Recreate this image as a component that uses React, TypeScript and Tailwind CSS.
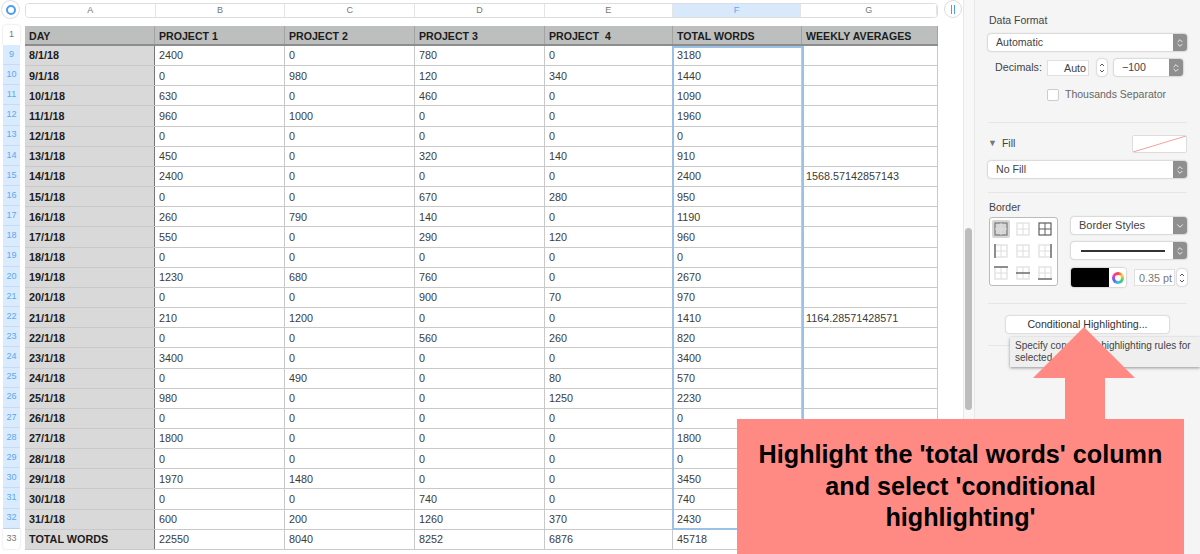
import React from 'react'
import { ChevronsUpDown, ChevronDown } from 'lucide-react'

const columns = ['A', 'B', 'C', 'D', 'E', 'F', 'G']
const colWidths = ['w-[130px]', 'w-[130px]', 'w-[130px]', 'w-[130px]', 'w-[128px]', 'w-[129px]', 'w-[136px]']

const rows = [
  ['9', '8/1/18', '2400', '0', '780', '0', '3180', ''],
  ['10', '9/1/18', '0', '980', '120', '340', '1440', ''],
  ['11', '10/1/18', '630', '0', '460', '0', '1090', ''],
  ['12', '11/1/18', '960', '1000', '0', '0', '1960', ''],
  ['13', '12/1/18', '0', '0', '0', '0', '0', ''],
  ['14', '13/1/18', '450', '0', '320', '140', '910', ''],
  ['15', '14/1/18', '2400', '0', '0', '0', '2400', '1568.57142857143'],
  ['16', '15/1/18', '0', '0', '670', '280', '950', ''],
  ['17', '16/1/18', '260', '790', '140', '0', '1190', ''],
  ['18', '17/1/18', '550', '0', '290', '120', '960', ''],
  ['19', '18/1/18', '0', '0', '0', '0', '0', ''],
  ['20', '19/1/18', '1230', '680', '760', '0', '2670', ''],
  ['21', '20/1/18', '0', '0', '900', '70', '970', ''],
  ['22', '21/1/18', '210', '1200', '0', '0', '1410', '1164.28571428571'],
  ['23', '22/1/18', '0', '0', '560', '260', '820', ''],
  ['24', '23/1/18', '3400', '0', '0', '0', '3400', ''],
  ['25', '24/1/18', '0', '490', '0', '80', '570', ''],
  ['26', '25/1/18', '980', '0', '0', '1250', '2230', ''],
  ['27', '26/1/18', '0', '0', '0', '0', '0', ''],
  ['28', '27/1/18', '1800', '0', '0', '0', '1800', ''],
  ['29', '28/1/18', '0', '0', '0', '0', '0', ''],
  ['30', '29/1/18', '1970', '1480', '0', '0', '3450', ''],
  ['31', '30/1/18', '0', '0', '740', '0', '740', ''],
  ['32', '31/1/18', '600', '200', '1260', '370', '2430', ''],
]

const headers = ['DAY', 'PROJECT 1', 'PROJECT 2', 'PROJECT 3', 'PROJECT  4', 'TOTAL WORDS', 'WEEKLY AVERAGES']
const totals = ['TOTAL WORDS', '22550', '8040', '8252', '6876', '45718', '']

function Select({ label, className }: { label: React.ReactNode; className: string }) {
  return (
    <div className={`flex items-center bg-white rounded-[3px] shadow-[0_0_2px_rgba(0,0,0,0.4)] h-[17px] ${className}`}>
      <div className="flex-1 pl-2 text-[10.6px] text-[#444] truncate">{label}</div>
      <div className="w-[14px] h-full bg-[#8f8f8f] rounded-r-[3px] flex items-center justify-center">
        <ChevronsUpDown className="w-2.5 h-2.5 text-white" />
      </div>
    </div>
  )
}

function BorderIcon({ outer, inner, strong, medium }: { outer?: boolean; inner?: boolean; strong?: string; medium?: boolean }) {
  const faint = '#dedede'
  const dark = medium ? '#777' : '#5f5f5f'
  return (
    <svg width="14" height="14" viewBox="0 0 14 14" fill="none">
      <rect x="1" y="1" width="12" height="12" stroke={outer ? dark : faint} strokeWidth="1.2" />
      <path d="M7 1V13M1 7H13" stroke={inner ? dark : faint} strokeWidth="1" />
      {strong === 'left' && <path d="M1 0V14" stroke="#666" strokeWidth="1.4" />}
      {strong === 'right' && <path d="M13 0V14" stroke="#666" strokeWidth="1.4" />}
      {strong === 'top' && <path d="M0 1H14" stroke="#666" strokeWidth="1.4" />}
      {strong === 'bottom' && <path d="M0 13H14" stroke="#666" strokeWidth="1.4" />}
      {strong === 'midh' && <path d="M0 7H14" stroke="#666" strokeWidth="1.4" />}
    </svg>
  )
}

function Stepper() {
  return (
    <div className="w-[10px] h-[17px] bg-white rounded-[4px] shadow-[0_0_2px_rgba(0,0,0,0.35)] flex flex-col items-center justify-center text-[#555]">
      <svg width="6" height="12" viewBox="0 0 6 12" fill="none">
        <path d="M1 4L3 2L5 4M1 8L3 10L5 8" stroke="currentColor" strokeWidth="1" />
      </svg>
    </div>
  )
}

export default function App() {
  return (
    <div className="relative w-[1200px] h-[554px] overflow-hidden bg-white flex font-['Liberation_Sans',Arial,sans-serif]">
      {/* Row numbers */}
      <div className="w-[25px] shrink-0 flex flex-col items-start pl-[3px]">
        <div className="h-[17px] w-full flex items-start -ml-[2px]">
          <div className="w-[19px] h-[19px] rounded-full bg-white border border-[#ddd] flex items-center justify-center">
            <div className="w-[10px] h-[10px] rounded-full border-2 border-[#4a9df0]" />
          </div>
        </div>
        <div className="h-[8px]" />
        <div className="w-[17px] h-[20px] flex items-center justify-center text-[9px] text-[#777] bg-white shadow-[0_0_2px_rgba(0,0,0,0.2)] rounded-t-[3px]">1</div>
        {rows.map((r) => (
          <div key={r[0]} className="w-[17px] h-[20.17px] flex items-center justify-center text-[9px] text-[#5ba7f0] bg-[#d9ebfc] border-b border-[#c4dcf5]">
            {r[0]}
          </div>
        ))}
        <div className="w-[17px] h-[20px] flex items-center justify-center text-[9px] text-[#777] bg-white shadow-[0_0_2px_rgba(0,0,0,0.2)] rounded-b-[3px]">33</div>
      </div>

      {/* Sheet */}
      <div className="w-[913px] shrink-0 flex flex-col">
        <div className="mt-[3px] h-[15px] flex rounded-[4px] border border-[#ddd] overflow-hidden text-[9px] text-[#777]">
          {columns.map((c, i) => (
            <div
              key={c}
              className={`${colWidths[i]} flex items-center justify-center border-r border-[#e4e4e4] ${c === 'F' ? 'bg-[#d7e9fb] text-[#5ba7f0]' : 'bg-white'}`}
            >
              {c}
            </div>
          ))}
        </div>
        <div className="h-[8px]" />
        <div className="flex h-[20px] bg-[#bdbfbe] border-b-2 border-[#8d8d8d] text-[10.6px] font-bold text-[#1c1c1c]">
          {headers.map((h, i) => (
            <div key={h} className={`${colWidths[i]} flex items-center pl-[4px] pt-[3px] border-r border-[#a3a3a3] whitespace-pre`}>
              {h}
            </div>
          ))}
        </div>
        {rows.map((r) => (
          <div key={r[0]} className="flex h-[20.17px] border-b border-[#c9c9c9] text-[10.8px] text-[#3b3b3b]">
            {r.slice(1).map((v, i) => (
              <div
                key={i}
                className={`${colWidths[i]} flex items-center pl-[4px] ${i === 0 ? 'bg-[#d9d9d9] font-bold text-[#1c1c1c] border-r border-[#777]' : 'border-r border-[#c9c9c9]'}`}
              >
                {v}
              </div>
            ))}
          </div>
        ))}
        <div className="flex h-[20px] border-b border-[#c9c9c9] text-[10.8px] text-[#3b3b3b]">
          {totals.map((v, i) => (
            <div
              key={i}
              className={`${colWidths[i]} flex items-center pl-[4px] ${i === 0 ? 'bg-[#d9d9d9] font-bold text-[#1c1c1c] border-r border-[#777]' : 'border-r border-[#c9c9c9]'}`}
            >
              {v}
            </div>
          ))}
        </div>
      </div>

      {/* Column toggle and scrollbar gutter */}
      <div className="w-[37px] shrink-0 flex">
        <div className="w-[25px] flex flex-col pl-[6px]">
          <div className="w-[18px] h-[18px] rounded-full bg-white border border-[#ddd] flex items-center justify-center gap-[2px]">
            <div className="w-px h-[9px] bg-[#4a9df0]" />
            <div className="w-px h-[9px] bg-[#4a9df0]" />
          </div>
        </div>
        <div className="w-[12px] border-x border-[#e8e8e8] bg-[#f8f8f8] flex flex-col">
          <div className="mt-[228px] w-[7px] h-[182px] rounded-full bg-[#bdbdbd] ml-[1px]" />
        </div>
      </div>

      {/* Inspector */}
      <div className="flex-1 bg-[#f5f5f5] pl-[13px] text-[#444]">
        <div className="pt-[14px] pl-px text-[10.5px] leading-[12px]">Data Format</div>
        <Select label="Automatic" className="mt-[8px] w-[199px]" />
        <div className="mt-[8px] flex items-center text-[10.7px] w-[199px] h-[17px]">
          <span className="ml-[7px] w-[46px] mr-[6px] whitespace-nowrap">Decimals:</span>
          <div className="w-[42px] h-[16px] bg-white border border-[#e0e0e0] text-right pr-[2px] text-[10.7px] leading-[15px]">Auto</div>
          <div className="ml-[8px]"><Stepper /></div>
          <Select label="−100" className="ml-[7px] w-[69px]" />
        </div>
        <div className="mt-[13px] ml-[59px] h-[12px] flex items-center gap-[6px] text-[10.5px] text-[#666]">
          <div className="w-[12px] h-[12px] bg-white border border-[#ccc] rounded-[2px]" />
          Thousands Separator
        </div>
        <div className="mt-[21px] h-px bg-[#e6e6e6] w-[199px]" />
        <div className="mt-[12px] w-[199px] flex items-center justify-between">
          <div className="flex items-center gap-[5px] text-[10.5px]">
            <span className="text-[9px] text-[#777]">▼</span> Fill
          </div>
          <div className="w-[55px] h-[18px] bg-white border border-[#ddd] rounded-[2px]">
            <svg width="53" height="16" viewBox="0 0 53 16">
              <path d="M0 16L53 0" stroke="#f4a0a0" strokeWidth="1" />
            </svg>
          </div>
        </div>
        <Select label="No Fill" className="mt-[8px] w-[199px]" />
        <div className="mt-[14px] h-px bg-[#e6e6e6] w-[199px]" />

        <div className="mt-[8px] pl-px text-[10.5px] leading-[12px]">Border</div>
        <div className="mt-[4px] w-[199px] flex">
          <div className="ml-px w-[69px] h-[69px] bg-white border border-[#bbb] rounded-[3px] grid grid-cols-[22px_22px_22px] grid-rows-[22px_22px_22px] place-items-center">
            <div className="bg-[#d6d6d6] w-[18px] h-[18px] flex items-center justify-center rounded-[2px]"><BorderIcon outer medium /></div>
            <BorderIcon />
            <BorderIcon outer inner />
            <BorderIcon strong="left" />
            <BorderIcon />
            <BorderIcon strong="right" />
            <BorderIcon strong="top" />
            <BorderIcon strong="midh" />
            <BorderIcon strong="bottom" />
          </div>
          <div className="ml-[13px] flex-1 flex flex-col">
            <div className="flex items-center bg-white rounded-[3px] shadow-[0_0_2px_rgba(0,0,0,0.4)] h-[17px]">
              <div className="flex-1 pl-2 text-[11px] text-[#444]">Border Styles</div>
              <div className="w-[14px] h-full bg-[#8f8f8f] rounded-r-[3px] flex items-center justify-center">
                <ChevronDown className="w-2.5 h-2.5 text-white" />
              </div>
            </div>
            <Select label={<div className="h-[2px] bg-[#333] w-[84px] ml-[2px]" />} className="mt-[8px]" />
            <div className="mt-[9px] flex items-center">
              <div className="w-[55px] h-[19px] flex rounded-[3px] overflow-hidden shadow-[0_0_2px_rgba(0,0,0,0.4)]">
                <div className="w-[38px] bg-black" />
                <div className="flex-1 bg-white flex items-center justify-center">
                  <div className="w-[12px] h-[12px] rounded-full bg-[conic-gradient(#ff4040,#ffd040,#40d060,#40c0f0,#6060f0,#f040c0,#ff4040)] flex items-center justify-center">
                    <div className="w-[6px] h-[6px] rounded-full bg-white" />
                  </div>
                </div>
              </div>
              <div className="ml-[8px] w-[41px] h-[17px] bg-white border border-[#e0e0e0] text-[10.8px] text-[#777] leading-[16px] text-right pr-[2px] whitespace-nowrap">0.35 pt</div>
              <div className="ml-[2px]"><Stepper /></div>
            </div>
          </div>
        </div>
        <div className="mt-[16px] h-px bg-[#e6e6e6] w-[199px]" />
        <div className="mt-[12px] ml-[18px] w-[163px] h-[17px] bg-white rounded-[3px] shadow-[0_0_2px_rgba(0,0,0,0.35)] text-[10.6px] text-center leading-[16px] text-[#333]">
          Conditional Highlighting...
        </div>
        <div className="mt-[12px] h-px bg-[#e6e6e6] w-[199px]" />
      </div>

      {/* Selection around the total words column */}
      <div className="absolute left-[672px] top-[46px] w-[132px] h-[484px] border-2 border-[#9cc1e6] pointer-events-none" />

      {/* Tooltip */}
      <div className="absolute left-[1010px] top-[337px] w-[190px] h-[30px] bg-[#efefef] shadow-[0_1px_3px_rgba(0,0,0,0.4)] pl-[5px] pt-[3px] text-[10px] leading-[12px] text-[#444] whitespace-nowrap">
        Specify conditional highlighting rules for<br />selected cells
      </div>

      {/* Arrow */}
      <svg className="absolute left-[1033px] top-[327px]" width="102" height="93" viewBox="0 0 102 93">
        <path d="M51 0L102 51H72V93H32V51H0Z" fill="#ff8a84" />
      </svg>

      {/* Callout */}
      <div className="absolute left-[737px] top-[419px] w-[447px] h-[135px] bg-[#ff8a84] flex items-center justify-center text-center text-[25.2px] leading-[31.5px] font-bold text-black">
        <p className="w-[420px]">Highlight the 'total words' column and select 'conditional highlighting'</p>
      </div>
    </div>
  )
}
